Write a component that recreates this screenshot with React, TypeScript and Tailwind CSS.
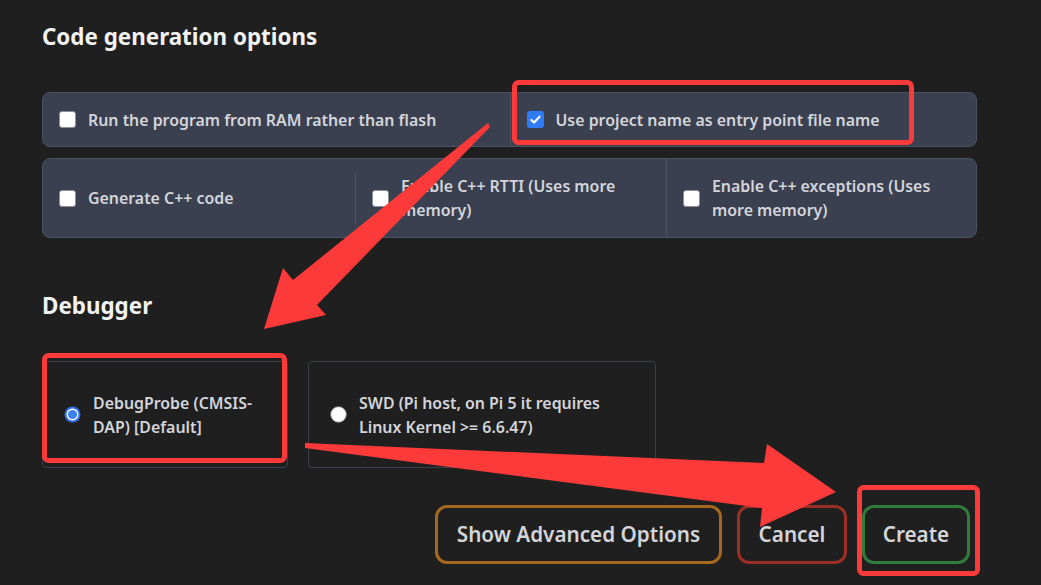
import React from 'react';

const font = "font-['Noto_Sans','Open_Sans',sans-serif]";

const Checkbox = ({ checked = false }: { checked?: boolean }) =>
  checked ? (
    <span className="flex h-[17px] w-[17px] shrink-0 items-center justify-center rounded-[3px] bg-[#2f7cf6]">
      <svg width="13" height="13" viewBox="0 0 16 16">
        <path d="M3 8.5l3.2 3.2L13 4.5" fill="none" stroke="#fff" strokeWidth="2.6" strokeLinecap="round" strokeLinejoin="round" />
      </svg>
    </span>
  ) : (
    <span className="h-[17px] w-[17px] shrink-0 rounded-[3px] border border-[#8b9099] bg-white" />
  );

const Radio = ({ checked = false }: { checked?: boolean }) => (
  <svg width="17" height="17" viewBox="0 0 17 17" className="shrink-0">
    {checked ? (
      <>
        <circle cx="8.5" cy="8.5" r="8" fill="#2f6fe8" />
        <circle cx="8.5" cy="8.5" r="6" fill="#fff" />
        <circle cx="8.5" cy="8.5" r="4.6" fill="#3b82f6" />
      </>
    ) : (
      <circle cx="8.5" cy="8.5" r="7.8" fill="#fff" stroke="#8b9099" strokeWidth="0.8" />
    )}
  </svg>
);

const Option = ({ label, checked, className = '' }: { label: string; checked?: boolean; className?: string }) => (
  <label className={`flex items-center gap-[12px] pl-[16px] pr-[16px] ${className}`}>
    <Checkbox checked={checked} />
    <span className="text-[15.9px] font-semibold leading-[24px] text-[#d3d5da]">{label}</span>
  </label>
);

// red markup drawn over the dialog
const Annotations = () => (
  <svg className="pointer-events-none absolute inset-0" width="1041" height="585" viewBox="0 0 1041 585">
    <g fill="none" stroke="#fd3a3a" strokeWidth="5">
      <rect x="514.5" y="82.5" width="397" height="60" rx="4" />
      <rect x="44.5" y="355.5" width="240" height="105" rx="4" />
      <rect x="859.5" y="487.5" width="118" height="86" rx="4" />
    </g>
    <g fill="#fd3a3a">
      <polygon points="488,123 293,280 283,268 264,329 326,315 317,305 490,127" />
      <polygon points="305,443 764,463 767,444 836,492 760,527 762,508 305,448" />
    </g>
  </svg>
);

export default function App() {
  return (
    <div className={`relative h-[585px] w-[1041px] overflow-hidden bg-[#1f1f1f] ${font}`}>
      <div className="pl-[42px] pr-[64px] pt-[21px]">
        <h2 className="text-[22.4px] font-bold leading-[32px] text-[#f2f2f2]">Code generation options</h2>

        <div className="mt-[39px] grid h-[55px] grid-cols-2 rounded-[8px] border border-[#4b5262] bg-[#3a4050]">
          <Option label="Run the program from RAM rather than flash" />
          <Option label="Use project name as entry point file name" checked className="border-l border-[#4b5262]" />
        </div>

        <div className="mt-[11px] flex h-[80px] rounded-[8px] border border-[#4b5262] bg-[#3a4050]">
          <Option label="Generate C++ code" className="w-[312px]" />
          <div className="my-[13px] w-px bg-[#4b5262]" />
          <Option label="Enable C++ RTTI (Uses more memory)" className="w-[310px]" />
          <div className="w-px bg-[#4b5262]" />
          <Option label="Enable C++ exceptions (Uses more memory)" className="flex-1" />
        </div>

        <h2 className="mt-[52px] text-[22.4px] font-bold leading-[32px] text-[#f2f2f2]">Debugger</h2>

        <div className="mt-[39px] flex gap-[20px]">
          <label className="flex h-[107px] w-[246px] items-center gap-[12px] rounded-[4px] border border-[#3a3f49] pl-[21px] pr-[6px]">
            <Radio checked />
            <span className="text-[15.9px] font-semibold leading-[24px] text-[#d3d5da]">DebugProbe (CMSIS-DAP) [Default]</span>
          </label>
          <label className="flex h-[107px] w-[348px] items-center gap-[12px] rounded-[4px] border border-[#3a3f49] pl-[21px] pr-[36px]">
            <Radio />
            <span className="text-[15.9px] font-semibold leading-[24px] text-[#d3d5da]">SWD (Pi host, on Pi 5 it requires Linux Kernel &gt;= 6.6.47)</span>
          </label>
        </div>

        <div className="mt-[37px] flex justify-end gap-[15px] pr-[7px]">
          <button className="h-[59px] w-[287px] rounded-[12px] border-[3px] border-[#a4691f] text-[20.7px] font-semibold text-[#d3d5da]">
            Show Advanced Options
          </button>
          <button className="h-[59px] w-[110px] rounded-[12px] border-[3px] border-[#9c2f25] text-[20.7px] font-semibold text-[#d3d5da]">
            Cancel
          </button>
          <button className="h-[59px] w-[108px] rounded-[12px] border-[3px] border-[#2f7c3b] text-[20.7px] font-semibold text-[#d3d5da]">
            Create
          </button>
        </div>
      </div>
      <Annotations />
    </div>
  );
}
